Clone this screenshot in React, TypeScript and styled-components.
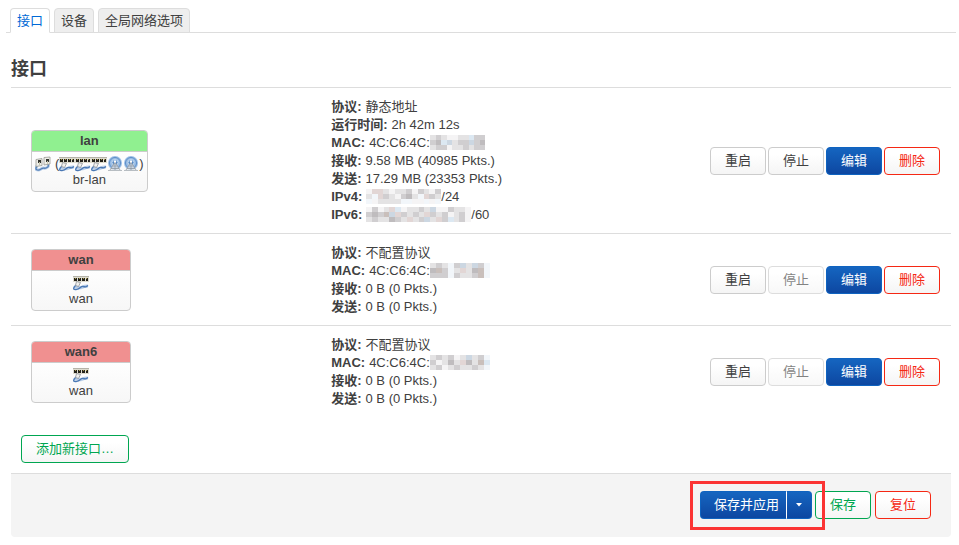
import React from "react";
import styled, { createGlobalStyle, css } from "styled-components";

const GlobalStyle = createGlobalStyle`
  * { box-sizing: border-box; }
  body {
    margin: 0;
    background: #fff;
    color: #404040;
    font: 13px/18px "Liberation Sans", "Noto Sans CJK SC", sans-serif;
  }
`;

const Page = styled.div`
  padding: 8px 3px 8px 6px;
`;

const TabList = styled.nav`
  display: flex;
  gap: 4px;
  height: 25px;
  padding: 0 4px;
  border-bottom: 1px solid #ddd;
`;

const Tab = styled.a<{ $active?: boolean }>`
  height: 25px;
  padding: 3px 6px;
  border: 1px solid #ddd;
  border-bottom-color: ${(p) => (p.$active ? "#fff" : "#ddd")};
  border-radius: 4px 4px 0 0;
  background: ${(p) => (p.$active ? "#fff" : "#eee")};
  color: ${(p) => (p.$active ? "#0069d6" : "#404040")};
  text-decoration: none;
`;

const Content = styled.main`
  margin: 0 5px;
`;

const Title = styled.h3`
  margin: 19px 0 0;
  border-bottom: 1px solid #ddd;
  font-size: 18px;
  line-height: 35px;
`;

const Table = styled.table`
  width: 100%;
  border-collapse: collapse;
  table-layout: fixed;
`;

const Row = styled.tr`
  border-bottom: 1px solid #ddd;
  &:last-child { border-bottom: 0; }
`;

const BoxCell = styled.th`
  width: 33%;
  padding: 10px 20px 9px;
  text-align: left;
  font-weight: normal;
`;

const InfoCell = styled.td`
  padding: 10px 10px 9px;
`;

const ActionCell = styled.td`
  width: 260px;
  padding: 10px 11px 9px;
`;

const IfaceBox = styled.div`
  display: inline-flex;
  flex-direction: column;
  min-width: 100px;
  height: 62px;
  overflow: hidden;
  border: 1px solid #ccc;
  border-radius: 4px;
  background: linear-gradient(#fff, #fff 25%, #f7f7f7);
  text-align: center;
  vertical-align: middle;
`;

const IfaceHead = styled.div<{ $up?: boolean }>`
  height: 21px;
  border-bottom: 1px solid #ccc;
  background: ${(p) => (p.$up ? "#90f090" : "#f09090")};
  font-weight: bold;
  line-height: 20px;
`;

const IfaceBody = styled.div`
  padding: 4px 3px 0;
  line-height: 16px;
`;

const IconLine = styled.div`
  display: flex;
  justify-content: center;
  height: 16px;
`;

const Paren = styled.span<{ $open?: boolean }>`
  margin-left: ${(p) => (p.$open ? "4px" : "0")};
  line-height: 16px;
`;

const Icon = styled.svg`
  display: block;
  width: 16px;
  height: 16px;
`;

const InfoLine = styled.div`
  display: flex;
  height: 18px;
  gap: 4px;
  white-space: nowrap;
`;

const Value = styled.span`
  display: flex;
`;

const Mosaic = styled.svg`
  display: block;
  height: 15px;
  margin-top: 1px;
`;

const Actions = styled.div<{ $gap?: number }>`
  display: flex;
  justify-content: flex-end;
  gap: ${(p) => p.$gap ?? 2}px;
`;

type Kind = "neutral" | "apply" | "save" | "remove";

const accents = { neutral: "#404040", save: "#00a651", remove: "#f52814" };

const Button = styled.button<{ $kind?: Kind }>`
  height: 28px;
  padding: 0 14px 1px;
  border: 1px solid #ccc;
  border-radius: 4px;
  background: linear-gradient(#fff, #fff 25%, #f5f5f5);
  color: #404040;
  font: inherit;
  white-space: nowrap;
  ${(p) =>
    (p.$kind === "save" || p.$kind === "remove") &&
    css`
      border-color: ${accents[p.$kind]};
      color: ${accents[p.$kind]};
    `}
  ${(p) =>
    p.$kind === "apply" &&
    css`
      border-color: #0f63c0;
      background: linear-gradient(#1565c0, #0d47a1);
      color: #fff;
    `}
  &:disabled { opacity: 0.65; }
`;

const AddBar = styled.div`
  padding: 18px 10px 10px;
`;

const Footer = styled.footer`
  padding: 17px 20px 18px;
  border-top: 1px solid #ddd;
  border-radius: 0 0 4px 4px;
  background: #f4f4f4;
`;

const Split = styled.div`
  position: relative;
  display: flex;
  margin-right: -1px;
`;

const SplitMain = styled(Button)`
  padding: 0 7px 1px 13px;
  border-right: 0;
  border-radius: 4px 0 0 4px;
`;

const SplitToggle = styled(Button)`
  display: flex;
  align-items: center;
  justify-content: center;
  width: 26px;
  padding: 0;
  border-left-color: #fff;
  border-radius: 0 4px 4px 0;
`;

const Highlight = styled.span`
  position: absolute;
  inset: -10px -13px -11px -10px;
  z-index: 1;
  border: 3px solid #fb3434;
  pointer-events: none;
`;

const EthernetIcon = () => (
  <Icon viewBox="0 0 16 16" aria-hidden="true">
    <path d="M0 1h16v6H0z" fill="#dedccf" />
    <path d="M0 1h16v1H0z" fill="#b5b3a9" />
    <path d="M1 3h3v3H1zM5 3h3v3H5zM9 3h3v3H9zM13 3h2v3h-2z" fill="#24231c" />
    <path d="M2 3h1v1H2zM6 3h1v1H6zM10 3h1v1h-1zM13 3h1v1h-1z" fill="#a79649" />
    <path d="M1 13.500C2 11 4 11 6 12.500S9 11 15 11" fill="none" stroke="#b7cde8" strokeWidth="3" />
    <path d="M3 10C1 12-1 15 3 14.500C8 14 7 11 10 11.500S13 12 15 10.500" fill="none" stroke="#4a78b4" strokeWidth="1.300" />
    <path d="M3.500 6.500l4 1-2 4-3-1z" fill="#f1f1ef" stroke="#8c8f94" strokeWidth=".8" />
  </Icon>
);

const BridgeIcon = () => (
  <Icon viewBox="0 0 16 16" aria-hidden="true">
    <path d="M2 10c-3 4 1 5 4 3c3-2 3 0 5-1s3-1 2-5" fill="none" stroke="#b7cde8" strokeWidth="3" />
    <path d="M2 10c-3 4 1 5 4 3c3-2 3 0 5-1s3-1 2-5" fill="none" stroke="#527eb6" strokeWidth="1.300" />
    <path d="M1 3.500l6-1v7l-6 1z" fill="#eeeee8" stroke="#999a94" strokeWidth=".8" />
    <path d="M9 1.500l6-.5v7l-6 1z" fill="#eeeee8" stroke="#999a94" strokeWidth=".8" />
    <path d="M3 4h3v3H3zM11 3h3v3h-3z" fill="#343630" />
    <path d="M4 6h1v3H4zM12 5h1v3h-1z" fill="#c8c6ae" />
  </Icon>
);

const WifiIcon = () => (
  <Icon viewBox="0 0 16 16" aria-hidden="true">
    <circle cx="8" cy="7" r="7" fill="#9cbfe6" />
    <circle cx="8" cy="7" r="5.500" fill="none" stroke="#5c8dc8" />
    <circle cx="8" cy="6.500" r="3" fill="#5489c6" stroke="#c5daf0" />
    <path d="M8 6l-5.500 8h11z" fill="#e2e6ea" fillOpacity=".7" />
    <path d="M8 6L3 14M8 6l5 8M8 6v8M5.500 10h5M4 12.500h8" fill="none" stroke="#8b939b" strokeWidth=".7" />
    <path d="M1 14h14v1H1z" fill="#b7bdc2" />
    <circle cx="8" cy="5.500" r="1.200" fill="#fff" />
  </Icon>
);

interface Pattern {
  width: number;
  rows: string[];
}

const tones: Record<string, string> = {
  a: "#f5f4f5", b: "#e4e3e4", c: "#d0ced0", d: "#bfbcbe",
  e: "#dce8f2", f: "#ccd7e2", g: "#e2d6d5", h: "#c9bfbb", i: "#f2f6fa",
};

const masks: Record<string, Pattern> = {
  lanMac: { width: 55, rows: ["bcbaabbecc", "cdefbccfcd", "bccabbcbcc"] },
  ip4: { width: 75, rows: ["aggbabbcacbac", "bigcbacdbigcb", "iabbbbiiaaiai"] },
  ip6: { width: 105, rows: ["acabgeabbcbfaacbba", "cdchfgcbcbgcbcabca", "bcbbdcbgbcfbgcebca"] },
  wanMac: { width: 60, rows: ["bcbicfbfci", "dhcibgbdhi", "cccicbbchi"] },
  wan6Mac: { width: 60, rows: ["bcbcabfbci", "cabdbgdbhe", "bcabcbbcbi"] },
};

const Masked = ({ name }: { name: string }) => {
  const { width, rows } = masks[name];
  const step = width / rows[0].length;
  return (
    <Mosaic width={width} viewBox={`0 0 ${width} 15`} shapeRendering="crispEdges" aria-hidden="true">
      {rows.map((row, y) =>
        row.split("").map((tone, x) => (
          <rect key={`${y}-${x}`} x={x * step} y={y * 5} width={step} height={5} fill={tones[tone]} />
        ))
      )}
    </Mosaic>
  );
};

interface Info {
  label: string;
  text?: string;
  mask?: string;
  tail?: string;
}

interface Iface {
  name: string;
  device: string;
  up?: boolean;
  info: Info[];
}

const traffic: Info[] = [
  { label: "接收:", text: "0 B (0 Pkts.)" },
  { label: "发送:", text: "0 B (0 Pkts.)" },
];

const interfaces: Iface[] = [
  {
    name: "lan",
    device: "br-lan",
    up: true,
    info: [
      { label: "协议:", text: "静态地址" },
      { label: "运行时间:", text: "2h 42m 12s" },
      { label: "MAC:", text: "4C:C6:4C:", mask: "lanMac" },
      { label: "接收:", text: "9.58 MB (40985 Pkts.)" },
      { label: "发送:", text: "17.29 MB (23353 Pkts.)" },
      { label: "IPv4:", mask: "ip4", tail: "/24" },
      { label: "IPv6:", mask: "ip6", tail: "/60" },
    ],
  },
  {
    name: "wan",
    device: "wan",
    info: [
      { label: "协议:", text: "不配置协议" },
      { label: "MAC:", text: "4C:C6:4C:", mask: "wanMac" },
      ...traffic,
    ],
  },
  {
    name: "wan6",
    device: "wan",
    info: [
      { label: "协议:", text: "不配置协议" },
      { label: "MAC:", text: "4C:C6:4C:", mask: "wan6Mac" },
      ...traffic,
    ],
  },
];

const InterfaceRow = ({ iface }: { iface: Iface }) => (
  <Row>
    <BoxCell scope="row">
      <IfaceBox>
        <IfaceHead $up={iface.up}>{iface.name}</IfaceHead>
        <IfaceBody>
          <IconLine>
            {iface.up ? (
              <>
                <BridgeIcon />
                <Paren $open>(</Paren>
                <EthernetIcon />
                <EthernetIcon />
                <EthernetIcon />
                <WifiIcon />
                <WifiIcon />
                <Paren>)</Paren>
              </>
            ) : (
              <EthernetIcon />
            )}
          </IconLine>
          {iface.device}
        </IfaceBody>
      </IfaceBox>
    </BoxCell>
    <InfoCell>
      {iface.info.map((line) => (
        <InfoLine key={line.label}>
          <strong>{line.label}</strong>
          <Value>
            {line.text}
            {line.mask && <Masked name={line.mask} />}
            {line.tail}
          </Value>
        </InfoLine>
      ))}
    </InfoCell>
    <ActionCell>
      <Actions>
        <Button>重启</Button>
        <Button disabled={!iface.up}>停止</Button>
        <Button $kind="apply">编辑</Button>
        <Button $kind="remove">删除</Button>
      </Actions>
    </ActionCell>
  </Row>
);

export default function App() {
  return (
    <Page>
      <GlobalStyle />
      <TabList>
        <Tab href="#interfaces" $active aria-current="page">接口</Tab>
        <Tab href="#devices">设备</Tab>
        <Tab href="#globals">全局网络选项</Tab>
      </TabList>
      <Content>
        <Title>接口</Title>
        <Table>
          <tbody>
            {interfaces.map((iface) => (
              <InterfaceRow key={iface.name} iface={iface} />
            ))}
          </tbody>
        </Table>
        <AddBar>
          <Button $kind="save">添加新接口…</Button>
        </AddBar>
        <Footer>
          <Actions $gap={4}>
            <Split>
              <SplitMain $kind="apply">保存并应用</SplitMain>
              <SplitToggle $kind="apply" aria-label="更多">
                <svg width="6" height="4" viewBox="0 0 6 4" aria-hidden="true">
                  <path d="M0 0h6L3 3.500z" fill="#fff" />
                </svg>
              </SplitToggle>
              <Highlight />
            </Split>
            <Button $kind="save">保存</Button>
            <Button $kind="remove">复位</Button>
          </Actions>
        </Footer>
      </Content>
    </Page>
  );
}
